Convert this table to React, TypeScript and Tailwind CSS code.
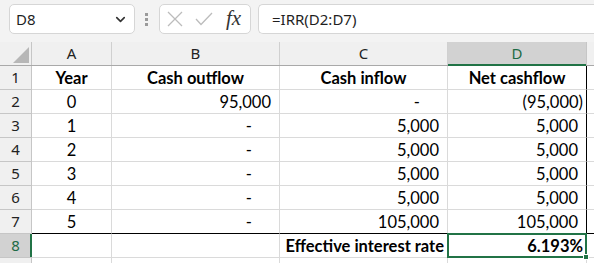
import React from 'react';
import { ChevronDown } from 'lucide-react';

const rows: string[][] = [
  ['1', 'Year', 'Cash outflow', 'Cash inflow', 'Net cashflow'],
  ['2', '0', '95,000', '-', '(95,000)'],
  ['3', '1', '-', '5,000', '5,000'],
  ['4', '2', '-', '5,000', '5,000'],
  ['5', '3', '-', '5,000', '5,000'],
  ['6', '4', '-', '5,000', '5,000'],
  ['7', '5', '-', '105,000', '105,000'],
  ['8', '', '', 'Effective interest rate', '6.193%'],
];

const uiFont = "font-['Noto_Sans','Open_Sans',sans-serif]";
const cellFont = "font-['Lato','Open_Sans',sans-serif]";

function numPad(v: string) {
  if (v === '-') return 'pr-[27px]';
  if (v.startsWith('(') || v.endsWith('%')) return 'pr-[3px]';
  return 'pr-[8px]';
}

const Toolbar: React.FC = () => (
  <div className={`h-[42px] bg-[#f3f3f3] flex items-start pt-[4px] ${uiFont}`}>
    <div className="ml-[9px] w-[126px] h-[30px] bg-white border border-[#d6d6d6] rounded-[5px] flex items-center justify-between pl-[6px] pr-[6px]">
      <span className="text-[15px] text-[#1f1f1f]">D8</span>
      <ChevronDown size={15} strokeWidth={2.6} className="text-[#333]" />
    </div>
    <div className="ml-[10px] w-[3px] h-[30px] flex flex-col items-center justify-center gap-[2px]">
      <span className="w-[3px] h-[3px] bg-[#9a9a9a]" />
      <span className="w-[3px] h-[3px] bg-[#9a9a9a]" />
      <span className="w-[3px] h-[3px] bg-[#9a9a9a]" />
    </div>
    <div className="ml-[11px] w-[92px] h-[30px] bg-white border border-[#d6d6d6] rounded-[5px] flex items-center pl-[7px]">
      <svg width="16" height="16" viewBox="0 0 16 16" className="shrink-0">
        <path d="M1 1 L15 15 M15 1 L1 15" stroke="#bcbcbc" strokeWidth="1.3" fill="none" />
      </svg>
      <svg width="18" height="14" viewBox="0 0 18 14" className="ml-[12px] shrink-0">
        <path d="M1 7 L6 12.5 L17 1" stroke="#bcbcbc" strokeWidth="1.3" fill="none" />
      </svg>
      <span className="ml-[13px] font-['Liberation_Serif',serif] italic text-[21px] leading-none text-[#333] -mt-[2px]">fx</span>
    </div>
    <div className="ml-[7px] flex-1 h-[30px] bg-white border border-r-0 border-[#d6d6d6] rounded-l-[5px] flex items-center pl-[13px]">
      <span className="text-[15px] text-[#1f1f1f]">=IRR(D2:D7)</span>
    </div>
  </div>
);

const widths = ['w-[80px]', 'w-[168px]', 'w-[168px]', 'w-[139px]'];

const HeaderRow: React.FC = () => (
  <div className={`flex h-[24px] bg-[#f0f0f0] border-b border-[#a9a9a9] ${uiFont} text-[15px] text-[#222]`}>
    <div className="w-[32px] shrink-0 border-r border-[#c6c6c6] relative">
      <svg width="16" height="16" viewBox="0 0 16 16" className="absolute left-[13px] top-[5px]">
        <path d="M16 0 L16 16 L0 16 Z" fill="#b7b7b7" />
      </svg>
    </div>
    {['A', 'B', 'C'].map((c, i) => (
      <div key={c} className={`${widths[i]} shrink-0 border-r border-[#d0d0d0] flex items-center justify-center`}>
        {c}
      </div>
    ))}
    <div className="w-[139px] shrink-0 bg-[#d2d2d2] border-r border-[#c6c6c6] flex items-center justify-center text-[#1d6b45] relative">
      D
      <span className="absolute left-0 right-0 -bottom-[1px] h-[2px] bg-[#217346]" />
    </div>
    <div className="flex-1" />
  </div>
);

const App: React.FC = () => {
  return (
    <div className="w-[594px] h-[263px] overflow-hidden bg-white">
      <Toolbar />
      <HeaderRow />
      {rows.map((r, ri) => {
        const head = ri === 0;
        const last = ri === rows.length - 1;
        const thickBottom = ri === 6;
        const bottom = thickBottom ? 'border-b border-b-black' : 'border-b border-b-[#dadada]';
        return (
          <div key={r[0]} className="flex h-[24px]">
            <div
              className={`w-[32px] shrink-0 border-r border-b border-[#c6c6c6] ${uiFont} text-[15px] flex items-center justify-center relative ${
                last ? 'bg-[#d2d2d2] text-[#1d6b45]' : 'bg-[#f0f0f0] text-[#222]'
              }`}
            >
              {r[0]}
              {last && <span className="absolute top-0 bottom-0 -right-[1px] w-[2px] bg-[#217346]" />}
            </div>
            {r.slice(1).map((v, ci) => {
              const isD = ci === 3;
              const rightBorder = isD && !last ? 'border-r border-r-black' : 'border-r border-r-[#dadada]';
              let align = 'justify-end';
              let pad = numPad(v);
              if (ci === 0 || head) {
                align = 'justify-center';
                pad = '';
              }
              if (last && ci === 2) pad = 'pr-[3px]';
              const bold = head || last ? 'font-bold' : '';
              return (
                <div
                  key={ci}
                  className={`${widths[ci]} shrink-0 ${rightBorder} ${bottom} ${cellFont} text-[16.5px] pt-[2px] text-black ${bold} flex items-center ${align} ${pad} relative whitespace-nowrap`}
                >
                  {v}
                  {last && isD && (
                    <span className="absolute -left-[1px] -top-[1px] w-[140px] h-[25px] border-2 border-[#217346]">
                      <span className="absolute -right-[4px] -bottom-[4px] w-[6px] h-[6px] bg-[#217346] border border-white" />
                    </span>
                  )}
                </div>
              );
            })}
            <div className={`flex-1 ${bottom}`} />
          </div>
        );
      })}
      <div className="flex h-[24px]">
        <div className="w-[32px] shrink-0 bg-[#f0f0f0] border-r border-[#c6c6c6]" />
        {widths.map((w, i) => (
          <div key={i} className={`${w} shrink-0 border-r border-[#dadada]`} />
        ))}
      </div>
    </div>
  );
};

export default App;
